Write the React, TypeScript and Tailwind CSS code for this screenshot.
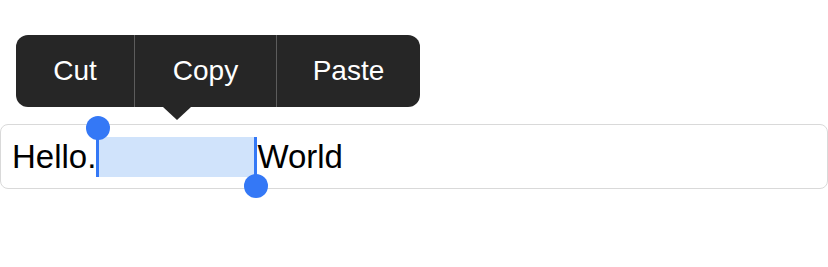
export default function App() {
  return (
    <div className="relative h-[267px] w-[828px] bg-white font-['Liberation_Sans',Arial,sans-serif]">
      {/* edit menu */}
      <div className="absolute left-[16px] top-[35px] z-10">
        <div className="flex h-[72px] w-[404px] overflow-hidden rounded-[12px] bg-[#262626] text-[28px] text-white">
          <div className="flex w-[118px] items-center justify-center">Cut</div>
          <div className="w-px bg-[#5c5c5c]" />
          <div className="flex w-[141px] items-center justify-center">Copy</div>
          <div className="w-px bg-[#5c5c5c]" />
          <div className="flex flex-1 items-center justify-center">Paste</div>
        </div>
        <div className="ml-[147px] h-0 w-0 border-x-[14px] border-t-[13px] border-x-transparent border-t-[#262626]" />
      </div>

      {/* text field */}
      <div className="pt-[124px]">
        <div className="flex h-[65px] w-full items-center rounded-[8px] border border-[#d9d9d9] pl-[11px] text-[33px] text-black">
          <span>Hello.</span>
          <span className="relative inline-block h-[40px] w-[161px]">
            <span className="absolute inset-y-0 left-[3px] right-[3px] bg-[#d0e3fb]" />
            <span className="absolute inset-y-0 left-0 w-[3px] bg-[#3478f6]" />
            <span className="absolute inset-y-0 right-0 w-[3px] bg-[#3478f6]" />
            <span className="absolute left-[-10.5px] top-[-21px] h-[24px] w-[24px] rounded-full bg-[#3478f6]" />
            <span className="absolute right-[-10.5px] top-[37px] h-[24px] w-[24px] rounded-full bg-[#3478f6]" />
          </span>
          <span>World</span>
        </div>
      </div>
    </div>
  )
}
